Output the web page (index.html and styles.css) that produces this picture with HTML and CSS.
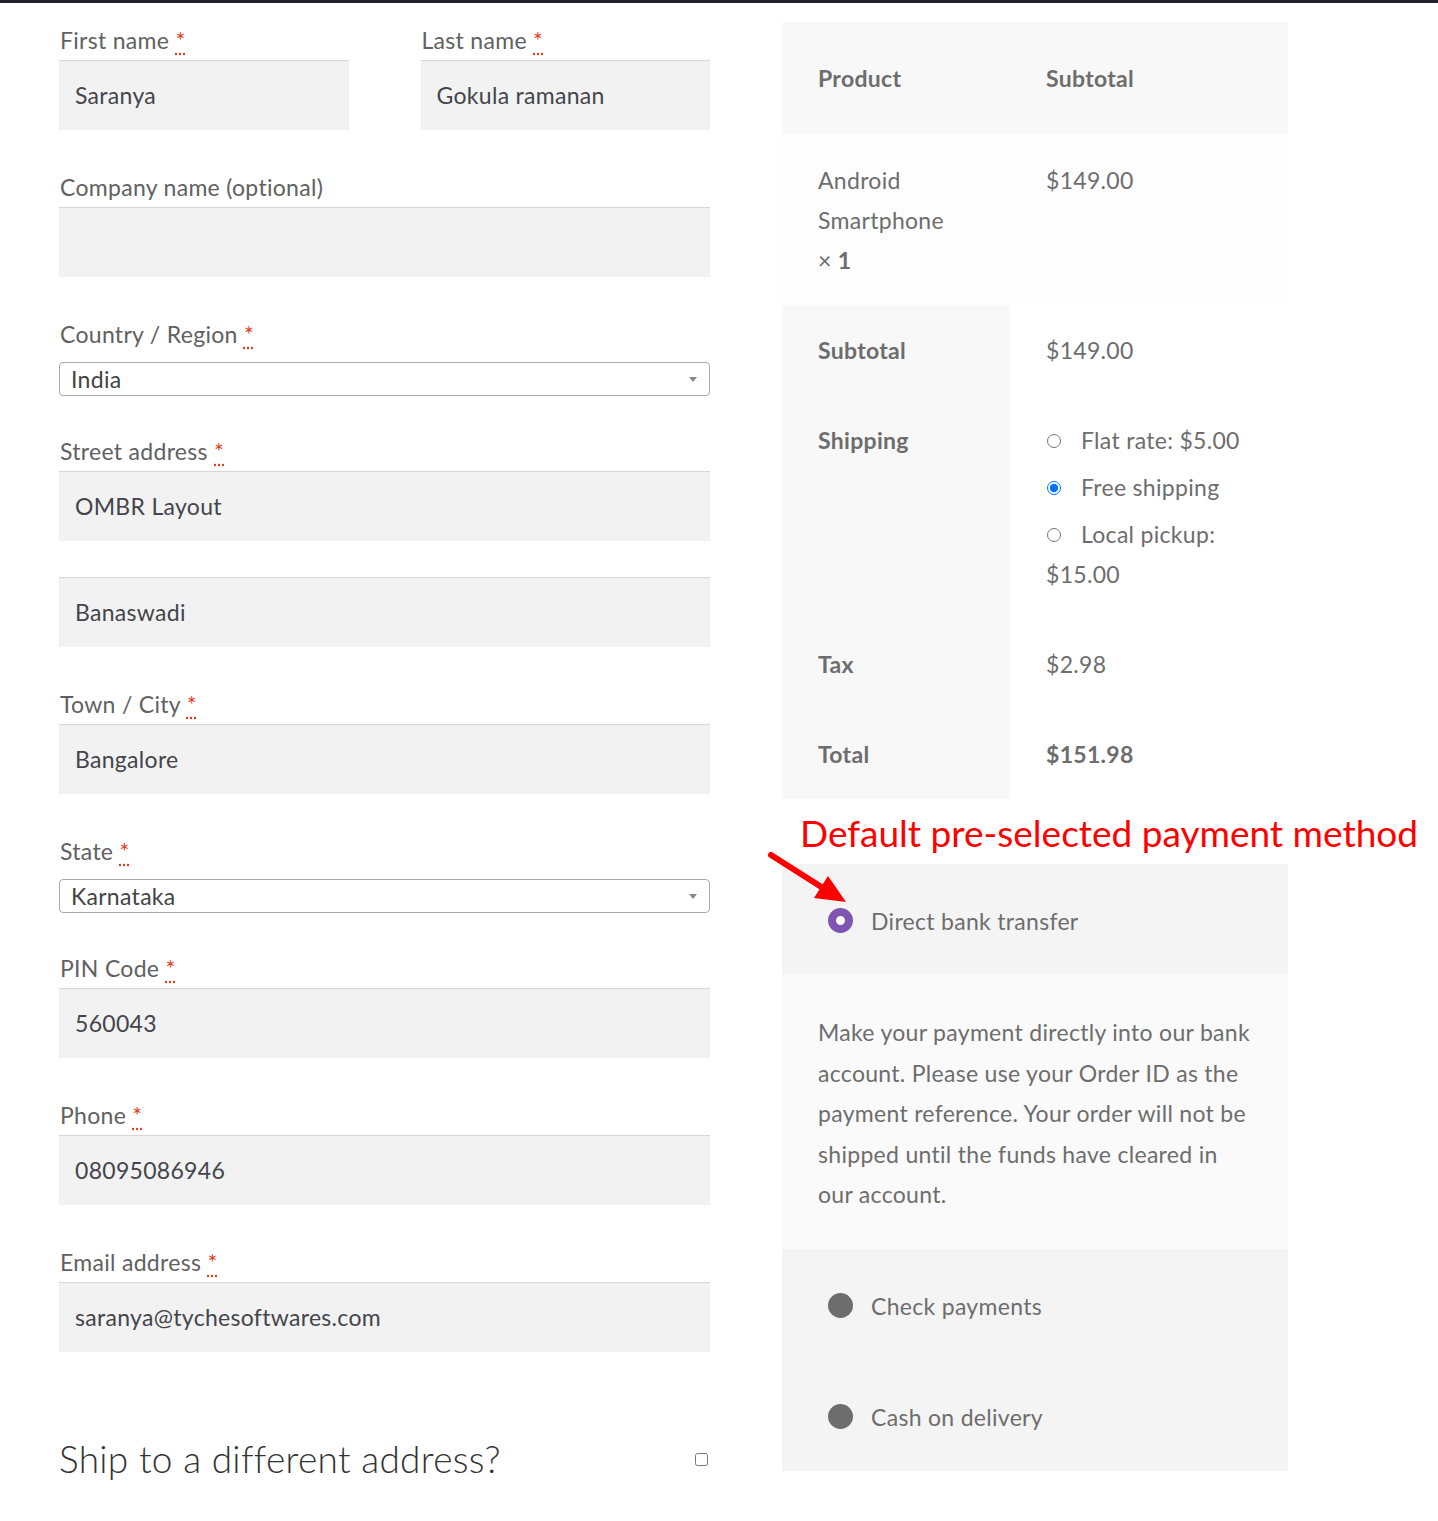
FILE: index.html
```html
<!DOCTYPE html>
<html lang="en">
<head>
    <meta charset="UTF-8">
    <meta name="viewport" content="width=device-width, initial-scale=1.0">
    <title>Checkout</title>
    <link rel="stylesheet" href="styles.css">
</head>
<body>
<div class="topbar"></div>

<div class="checkout">
    <div class="billing">
        <div class="row-pair">
            <p class="field">
                <label>First name <abbr class="required" title="required">*</abbr></label>
                <input class="text" type="text" value="Saranya">
            </p>
            <p class="field">
                <label>Last name <abbr class="required" title="required">*</abbr></label>
                <input class="text" type="text" value="Gokula ramanan">
            </p>
        </div>

        <p class="field">
            <label>Company name (optional)</label>
            <input class="text" type="text" value="">
        </p>

        <p class="field field-select">
            <label>Country / Region <abbr class="required" title="required">*</abbr></label>
            <span class="select"><span class="select-value">India</span><span class="select-arrow"></span></span>
        </p>

        <p class="field">
            <label>Street address <abbr class="required" title="required">*</abbr></label>
            <input class="text" type="text" value="OMBR Layout">
            <input class="text second" type="text" value="Banaswadi">
        </p>

        <p class="field">
            <label>Town / City <abbr class="required" title="required">*</abbr></label>
            <input class="text" type="text" value="Bangalore">
        </p>

        <p class="field field-select">
            <label>State <abbr class="required" title="required">*</abbr></label>
            <span class="select"><span class="select-value">Karnataka</span><span class="select-arrow"></span></span>
        </p>

        <p class="field">
            <label>PIN Code <abbr class="required" title="required">*</abbr></label>
            <input class="text" type="text" value="560043">
        </p>

        <p class="field">
            <label>Phone <abbr class="required" title="required">*</abbr></label>
            <input class="text" type="tel" value="08095086946">
        </p>

        <p class="field">
            <label>Email address <abbr class="required" title="required">*</abbr></label>
            <input class="text" type="email" value="saranya@tychesoftwares.com">
        </p>

        <h3 class="ship-heading">
            <span>Ship to a different address?</span>
            <input type="checkbox" class="ship-check">
        </h3>
    </div>

    <div class="review">
        <table class="order-table">
            <thead>
                <tr>
                    <th class="col-name">Product</th>
                    <th>Subtotal</th>
                </tr>
            </thead>
            <tbody>
                <tr class="cart-item">
                    <td class="col-name">Android<br>Smartphone<br><span class="qty">× <strong>1</strong></span></td>
                    <td>$149.00</td>
                </tr>
            </tbody>
            <tfoot>
                <tr>
                    <th>Subtotal</th>
                    <td>$149.00</td>
                </tr>
                <tr>
                    <th>Shipping</th>
                    <td>
                        <ul class="shipping-methods">
                            <li><input type="radio" name="ship"><label>Flat rate: $5.00</label></li>
                            <li><input type="radio" name="ship" checked><label>Free shipping</label></li>
                            <li><input type="radio" name="ship"><label>Local pickup: $15.00</label></li>
                        </ul>
                    </td>
                </tr>
                <tr>
                    <th>Tax</th>
                    <td>$2.98</td>
                </tr>
                <tr>
                    <th>Total</th>
                    <td><strong>$151.98</strong></td>
                </tr>
            </tfoot>
        </table>

        <div class="note">
            <span class="note-text">Default pre-selected payment method</span>
            <svg class="note-arrow" width="85" height="58" viewBox="0 0 85 58">
                <line x1="5" y1="6" x2="57" y2="39" stroke="#ff0000" stroke-width="6" stroke-linecap="round"/>
                <polygon points="80,53 48,49 62,27" fill="#ff0000"/>
            </svg>
        </div>

        <ul class="methods">
            <li class="method">
                <span class="dot dot-on"></span>
                <span>Direct bank transfer</span>
            </li>
            <li class="method-box">
                <p>Make your payment directly into our bank<br>account. Please use your Order ID as the<br>payment reference. Your order will not be<br>shipped until the funds have cleared in<br>our account.</p>
            </li>
            <li class="method">
                <span class="dot"></span>
                <span>Check payments</span>
            </li>
            <li class="method">
                <span class="dot"></span>
                <span>Cash on delivery</span>
            </li>
        </ul>
    </div>
</div>
</body>
</html>
```

FILE: styles.css
```css
body {
    margin: 0;
    font-family: Lato, "Open Sans", sans-serif;
    font-size: 23px;
    letter-spacing: 0.3px;
    color: #6d6d6d;
    background-color: #fff;
}

.topbar {
    height: 3px;
    background-color: #1f2327;
}

.checkout {
    display: flex;
    gap: 72px;
    padding: 18px 0 0 59px;
}

/* billing form */

.billing {
    width: 651px;
    padding-top: 1px;
}

.row-pair {
    display: grid;
    grid-template-columns: 1fr 1fr;
    gap: 72px;
}

.field {
    margin: 0 0 39px;
}

.field label {
    display: block;
    line-height: 36px;
    margin: 0 0 2px 1px;
    color: #616161;
}

.field-select {
    margin-bottom: 37px;
}

.field-select label {
    margin-bottom: 10px;
}

abbr.required {
    color: #e2401c;
    text-decoration: underline dotted;
    text-underline-offset: 4px;
}

.text {
    display: block;
    box-sizing: border-box;
    width: 100%;
    height: 70px;
    padding: 0 16px;
    border: 0;
    margin: 0;
    background-color: #f2f2f2;
    box-shadow: inset 0 1px 1px rgba(0, 0, 0, 0.125);
    font-family: inherit;
    font-size: 23px;
    letter-spacing: 0.3px;
    color: #43454b;
    outline: none;
}

.text.second {
    margin-top: 36px;
}

.select {
    display: flex;
    align-items: center;
    justify-content: space-between;
    box-sizing: border-box;
    height: 34px;
    padding: 0 12px 0 11px;
    border: 1px solid #aaa;
    border-radius: 4px;
    color: #444;
}

.select-value {
    line-height: 32px;
}

.select-arrow {
    width: 0;
    height: 0;
    border-left: 4px solid transparent;
    border-right: 4px solid transparent;
    border-top: 5px solid #888;
}

.ship-heading {
    display: flex;
    justify-content: space-between;
    align-items: center;
    margin: 84px 0 0;
    font-size: 37px;
    font-weight: 300;
    line-height: 46px;
    color: #333;
}

.ship-check {
    width: 13px;
    height: 13px;
    margin: 0 2px 0 0;
}

/* order review */

.review {
    width: 506px;
    padding-top: 1px;
}

.order-table {
    width: 100%;
    border-collapse: collapse;
    table-layout: fixed;
}

.order-table th,
.order-table td {
    text-align: left;
    vertical-align: top;
    line-height: 40px;
    padding: 25px 36px;
}

.order-table th {
    font-weight: 700;
}

.order-table .col-name {
    width: 156px;
}

.order-table thead th {
    background-color: #f8f8f8;
    padding: 36px 36px 35px;
}

.cart-item td {
    background-color: #fdfdfd;
    padding: 27px 36px 25px;
}

.qty strong {
    font-weight: 700;
}

.order-table tfoot th {
    background-color: #f8f8f8;
}

.order-table tfoot td {
    background-color: #fff;
}

.order-table tfoot strong {
    font-weight: 700;
}

.shipping-methods {
    list-style: none;
    margin: 0;
    padding: 0;
}

.shipping-methods li {
    margin-bottom: 7px;
}

.shipping-methods li:last-child {
    margin-bottom: 0;
}

.shipping-methods input {
    width: 14px;
    height: 14px;
    margin: 0 20px 0 1px;
    vertical-align: 1px;
}

/* annotation */

.note {
    position: relative;
    height: 65px;
    padding-left: 18px;
    line-height: 68px;
    white-space: nowrap;
}

.note-text {
    color: #ff0000;
    font-size: 37px;
    letter-spacing: 0;
}

.note-arrow {
    position: absolute;
    left: -16px;
    top: 50px;
    z-index: 2;
}

/* payment methods */

.methods {
    list-style: none;
    margin: 0;
    padding: 0;
}

.method {
    display: flex;
    align-items: center;
    gap: 18px;
    height: 111px;
    padding: 3px 0 0 46px;
    box-sizing: border-box;
    background-color: #f4f4f4;
    line-height: 40px;
}

.method:first-child {
    height: 110px;
}

.dot {
    width: 25px;
    height: 25px;
    border-radius: 50%;
    background-color: #6d6d6d;
    box-sizing: border-box;
}

.dot-on {
    background-color: #fff;
    border: 8px solid #7f54b3;
}

.method-box {
    background-color: #fafafa;
    padding: 38px 28px 34px 36px;
}

.method-box p {
    margin: 0;
    line-height: 40.5px;
}
```
